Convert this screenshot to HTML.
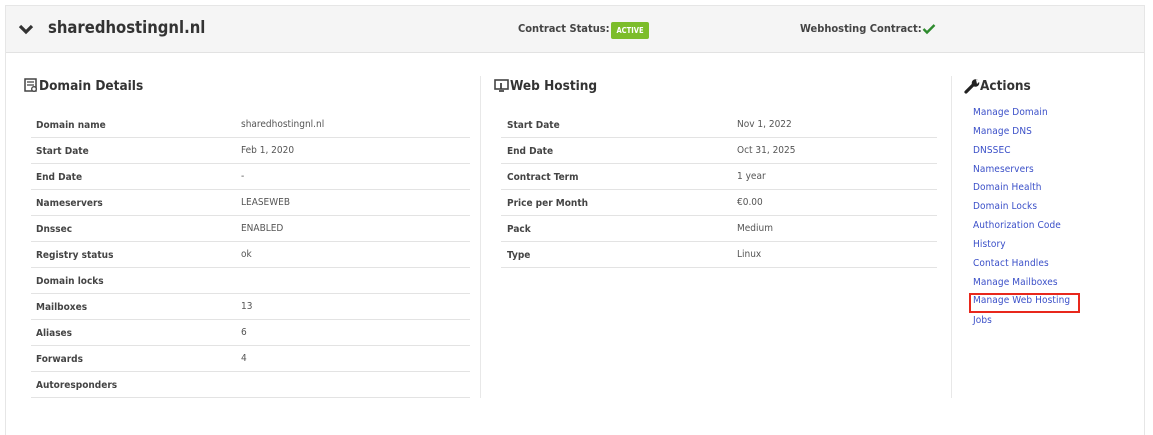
<!DOCTYPE html>
<html><head><meta charset="utf-8"><style>
*{margin:0;padding:0;box-sizing:border-box}
body{width:1153px;height:422px;background:#fff;font-family:"DejaVu Sans Condensed","Liberation Sans",sans-serif;color:#333;position:relative;overflow:hidden}
.panel{position:absolute;left:5px;top:5px;width:1140px;height:430px;border:1px solid #e6e6e6;border-bottom:none}
.hdr{position:absolute;left:0;top:0;width:100%;height:47px;background:#f5f5f5;border-bottom:1px solid #e2e2e2}
.abs{position:absolute;white-space:nowrap}
h2{position:absolute;font-size:13.5px;font-weight:bold;color:#333;white-space:nowrap}
.row{position:absolute;height:26px;border-bottom:1px solid #e3e3e3;font-size:10px}
.row b{position:absolute;top:8px;color:#444}
.row span{position:absolute;top:7px;color:#555}
.vd{position:absolute;width:1px;background:#e8e8e8}
a{position:absolute;left:973px;font-size:10px;color:#3a4fc8;text-decoration:none;white-space:nowrap;letter-spacing:0.1px}
</style></head><body>
<div class="panel"><div class="hdr"></div></div>
<svg class="abs" style="left:18px;top:24px" width="16" height="12" viewBox="0 0 16 12"><path d="M2 2 L8 8 L14 2" stroke="#333" stroke-width="3.2" fill="none"/></svg>
<div class="abs" style="left:48px;top:18px;font-size:16.5px;font-weight:bold;color:#333">sharedhostingnl.nl</div>
<div class="abs" style="left:518px;top:22px;font-size:11px;font-weight:bold;color:#444">Contract Status:</div>
<div class="abs" style="left:611px;top:22px;width:38px;height:17px;background:#7cbd2a;border-radius:2px;color:#fff;font-size:7.5px;font-weight:bold;text-align:center;line-height:17px">ACTIVE</div>
<div class="abs" style="left:800px;top:22px;font-size:11px;font-weight:bold;color:#444">Webhosting Contract:</div>
<svg class="abs" style="left:922px;top:23px" width="14" height="12" viewBox="0 0 14 12"><path d="M1.5 6 L5 9.5 L12.5 2" stroke="#2e8b2e" stroke-width="2.4" fill="none"/></svg>

<svg class="abs" style="left:24px;top:78px" width="14" height="15" viewBox="0 0 14 15"><rect x="1" y="1" width="11" height="12" fill="none" stroke="#444" stroke-width="1.5"/><path d="M3 4h7M3 7h7" stroke="#444" stroke-width="1.3"/><circle cx="10" cy="11" r="2.3" fill="#fff" stroke="#444" stroke-width="1.3"/></svg>
<h2 style="left:39px;top:78px">Domain Details</h2>
<div class="row" style="left:31px;top:112px;width:439px"><b style="left:5px">Domain name</b><span style="left:210px">sharedhostingnl.nl</span></div>
<div class="row" style="left:31px;top:138px;width:439px"><b style="left:5px">Start Date</b><span style="left:210px">Feb 1, 2020</span></div>
<div class="row" style="left:31px;top:164px;width:439px"><b style="left:5px">End Date</b><span style="left:210px">-</span></div>
<div class="row" style="left:31px;top:190px;width:439px"><b style="left:5px">Nameservers</b><span style="left:210px">LEASEWEB</span></div>
<div class="row" style="left:31px;top:216px;width:439px"><b style="left:5px">Dnssec</b><span style="left:210px">ENABLED</span></div>
<div class="row" style="left:31px;top:242px;width:439px"><b style="left:5px">Registry status</b><span style="left:210px">ok</span></div>
<div class="row" style="left:31px;top:268px;width:439px"><b style="left:5px">Domain locks</b><span style="left:210px"></span></div>
<div class="row" style="left:31px;top:294px;width:439px"><b style="left:5px">Mailboxes</b><span style="left:210px">13</span></div>
<div class="row" style="left:31px;top:320px;width:439px"><b style="left:5px">Aliases</b><span style="left:210px">6</span></div>
<div class="row" style="left:31px;top:346px;width:439px"><b style="left:5px">Forwards</b><span style="left:210px">4</span></div>
<div class="row" style="left:31px;top:372px;width:439px"><b style="left:5px">Autoresponders</b><span style="left:210px"></span></div>
<div class="vd" style="left:480px;top:76px;height:322px"></div>

<svg class="abs" style="left:494px;top:79px" width="16" height="14" viewBox="0 0 16 14"><rect x="1" y="1" width="13" height="9" fill="none" stroke="#444" stroke-width="1.6"/><path d="M7 4v6M5 12h5" stroke="#444" stroke-width="1.8"/></svg>
<h2 style="left:510px;top:78px">Web Hosting</h2>
<div class="row" style="left:501px;top:112px;width:436px"><b style="left:6px">Start Date</b><span style="left:236px">Nov 1, 2022</span></div>
<div class="row" style="left:501px;top:138px;width:436px"><b style="left:6px">End Date</b><span style="left:236px">Oct 31, 2025</span></div>
<div class="row" style="left:501px;top:164px;width:436px"><b style="left:6px">Contract Term</b><span style="left:236px">1 year</span></div>
<div class="row" style="left:501px;top:190px;width:436px"><b style="left:6px">Price per Month</b><span style="left:236px">€0.00</span></div>
<div class="row" style="left:501px;top:216px;width:436px"><b style="left:6px">Pack</b><span style="left:236px">Medium</span></div>
<div class="row" style="left:501px;top:242px;width:436px"><b style="left:6px">Type</b><span style="left:236px">Linux</span></div>
<div class="vd" style="left:951px;top:76px;height:322px"></div>

<svg class="abs" style="left:964px;top:79px" width="17" height="15" viewBox="0 0 17 15"><path d="M2 13 L9 6" stroke="#222" stroke-width="3.2" stroke-linecap="round"/><circle cx="11.5" cy="4" r="3.8" fill="#222"/><path d="M12 0.5 L16 2 L13 5 Z" fill="#fff"/></svg>
<h2 style="left:980px;top:78px">Actions</h2>
<a style="top:107px">Manage Domain</a>
<a style="top:126px">Manage DNS</a>
<a style="top:145px">DNSSEC</a>
<a style="top:164px">Nameservers</a>
<a style="top:182px">Domain Health</a>
<a style="top:201px">Domain Locks</a>
<a style="top:220px">Authorization Code</a>
<a style="top:239px">History</a>
<a style="top:258px">Contact Handles</a>
<a style="top:277px">Manage Mailboxes</a>
<a style="top:295px">Manage Web Hosting</a>
<div class="abs" style="left:969px;top:293px;width:111px;height:20px;border:2px solid #e8281c"></div>
<a style="top:315px">Jobs</a>
</body></html>
